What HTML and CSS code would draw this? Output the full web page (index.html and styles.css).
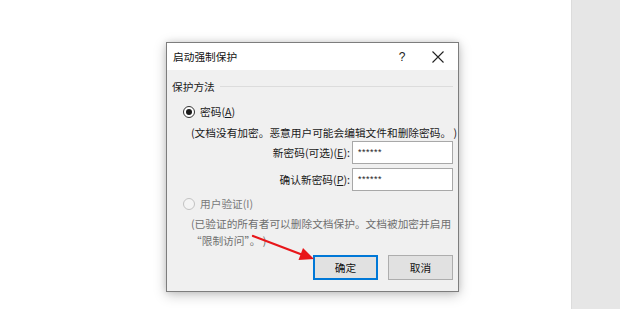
FILE: index.html
```html
<!DOCTYPE html>
<html lang="zh">
<head>
<meta charset="utf-8">
<link rel="stylesheet" href="styles.css">
</head>
<body>
<div class="page">
  <div class="canvas">
    <div class="dialog">
      <div class="titlebar">
        <span class="title">启动强制保护</span>
        <span class="help">?</span>
        <span class="close">
          <svg width="12" height="12" viewBox="0 0 12 12"><path d="M0.5 0.5 L11.5 11.5 M11.5 0.5 L0.5 11.5" stroke="#222" stroke-width="1.1" fill="none"/></svg>
        </span>
      </div>
      <div class="body">
        <div class="group-head"><span>保护方法</span><span class="group-line"></span></div>
        <div class="radio-row">
          <span class="radio checked"></span><span>密码(<u>A</u>)</span>
        </div>
        <div class="desc">(文档没有加密。恶意用户可能会编辑文件和删除密码。 )</div>
        <div class="field-row">
          <span class="label">新密码(可选)(<u>E</u>):</span>
          <span class="input">******</span>
        </div>
        <div class="field-row second">
          <span class="label">确认新密码(<u>P</u>):</span>
          <span class="input">******</span>
        </div>
        <div class="radio-row disabled">
          <span class="radio"></span><span>用户验证(I)</span>
        </div>
        <div class="desc disabled-text">(已验证的所有者可以删除文档保护。文档被加密并启用<br>“限制访问”。 )</div>
        <div class="buttons">
          <span class="btn default">确定</span>
          <span class="btn">取消</span>
        </div>
      </div>
    </div>
    <svg class="arrow" width="620" height="309" viewBox="0 0 620 309">
      <line x1="253" y1="236" x2="303" y2="255" stroke="#e8161a" stroke-width="2.2" stroke-linecap="round"/>
      <polygon points="314,259 298.5,260 303,248" fill="#e8161a"/>
    </svg>
  </div>
  <div class="side"></div>
</div>
</body>
</html>
```
FILE: styles.css
```css
* { box-sizing: border-box; }
html, body { margin: 0; padding: 0; }
body {
  width: 620px;
  height: 309px;
  overflow: hidden;
  background: #ffffff;
  font-family: "Noto Sans CJK SC", "Microsoft YaHei", sans-serif;
  font-size: 10.7px;
  color: #1a1a1a;
}
.page {
  display: flex;
  width: 620px;
  height: 309px;
}
.canvas {
  position: relative;
  flex: 1;
  height: 309px;
}
.side {
  width: 49px;
  height: 309px;
  background: #e6e6e6;
  border-left: 1px solid #dcdcdc;
}
.dialog {
  margin-left: 166px;
  margin-top: 42px;
  width: 293px;
  height: 250px;
  border: 1px solid #7d7d7d;
  background: #f0f0f0;
  box-shadow: 0 3px 12px rgba(0,0,0,0.22), 0 0 6px rgba(0,0,0,0.12);
  display: flex;
  flex-direction: column;
}
.titlebar {
  height: 27px;
  background: #ffffff;
  display: flex;
  align-items: center;
  padding-left: 6px;
}
.title {
  flex: 1;
  color: #111;
}
.help {
  width: 16px;
  text-align: center;
  font-family: "Liberation Sans", sans-serif;
  font-size: 12px;
  color: #222;
  margin-right: 22px;
}
.close {
  width: 12px;
  height: 12px;
  margin-right: 14px;
  display: flex;
}
.body {
  flex: 1;
  padding: 9px 5px 0 5px;
  display: flex;
  flex-direction: column;
}
.group-head {
  display: flex;
  align-items: center;
  height: 16px;
  line-height: 16px;
}
.group-line {
  flex: 1;
  height: 1px;
  margin-left: 5px;
  border-top: 1px solid #dcdcdc;
  margin-top: -1px;
}
.radio-row {
  display: flex;
  align-items: center;
  height: 16px;
  line-height: 16px;
  margin-top: 9px;
  padding-left: 11px;
}
.radio {
  width: 12px;
  height: 12px;
  border-radius: 50%;
  border: 1px solid #333;
  background: #fff;
  margin-right: 5px;
  display: flex;
  align-items: center;
  justify-content: center;
}
.radio.checked::after {
  content: "";
  width: 6px;
  height: 6px;
  border-radius: 50%;
  background: #1a1a1a;
}
.radio-row.disabled {
  color: #7a7a7a;
  margin-top: 5px;
}
.radio-row.disabled .radio {
  border-color: #c2c2c2;
  background: #f4f4f4;
}
.desc {
  margin-top: 5px;
  padding-left: 19px;
  line-height: 16px;
  white-space: nowrap;
}
.disabled-text {
  color: #6f6f6f;
  line-height: 17px;
  margin-top: 3px;
}
.field-row {
  display: flex;
  justify-content: flex-end;
  align-items: center;
  margin-top: 0;
  height: 23px;
}
.field-row.second {
  margin-top: 4px;
}
.label {
  margin-right: 2px;
}
.input {
  width: 101px;
  height: 23px;
  background: #fff;
  border: 1px solid #a8a8a8;
  font-family: "Liberation Sans", sans-serif;
  font-size: 9px;
  padding: 4px 0 0 5px;
  letter-spacing: 0.5px;
  line-height: 12px;
}
.buttons {
  display: flex;
  justify-content: flex-end;
  gap: 10px;
  margin-top: 6px;
}
.btn {
  width: 65px;
  height: 25px;
  background: #e1e1e1;
  border: 1px solid #adadad;
  display: flex;
  align-items: center;
  justify-content: center;
  color: #111;
}
.btn.default {
  border: 2px solid #0078d7;
}
.arrow {
  position: absolute;
  left: 0;
  top: 0;
  pointer-events: none;
}
```
